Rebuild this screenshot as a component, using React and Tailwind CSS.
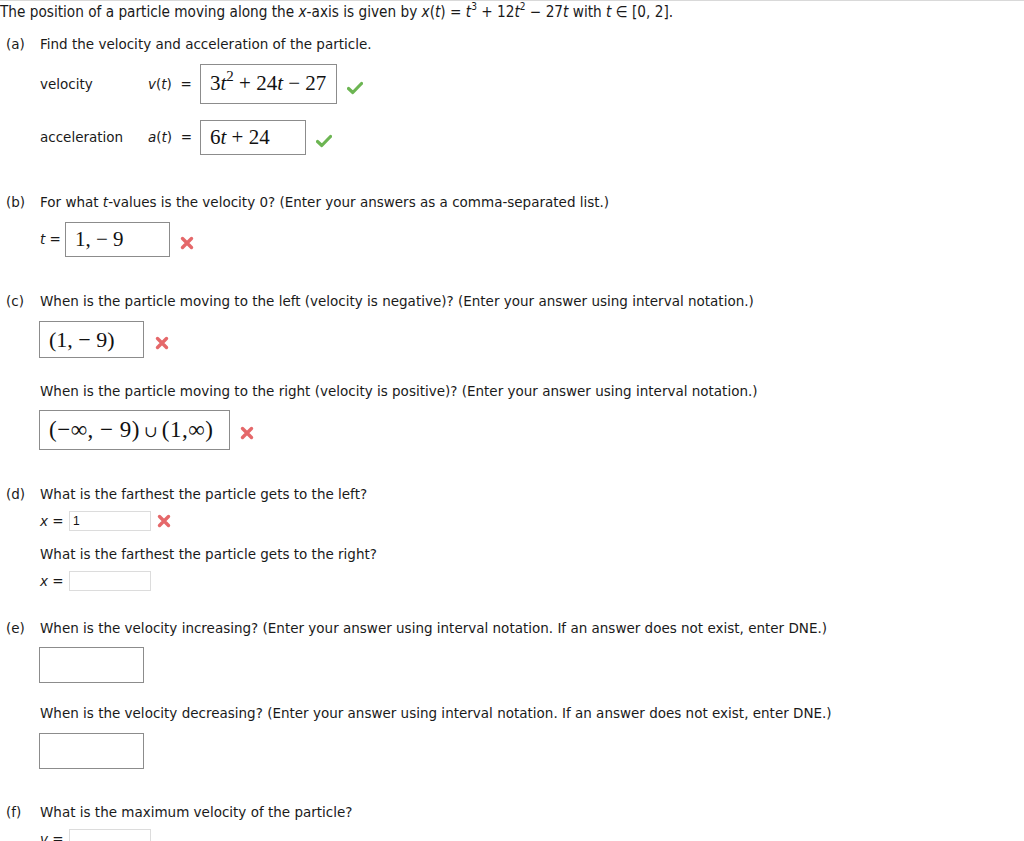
import React from "react";

const Check = () => (
  <svg width="16" height="14" viewBox="0 0 16 14" className="shrink-0">
    <path d="M1.5 7.5 L5.8 11.5 L14.5 2.5" fill="none" stroke="#6cb552" strokeWidth="3.2" strokeLinecap="round" strokeLinejoin="round" />
  </svg>
);

const Cross = () => (
  <svg width="14" height="14" viewBox="0 0 14 14" className="shrink-0">
    <path d="M2.5 2.5 L11.5 11.5 M11.5 2.5 L2.5 11.5" fill="none" stroke="#e5686a" strokeWidth="3.4" strokeLinecap="round" />
  </svg>
);

const M = ({ children, className = "" }) => (
  <span className={"font-['Liberation_Serif',serif] text-[#111] " + className}>{children}</span>
);
const I = ({ children }) => <i className="italic">{children}</i>;

const Line = ({ label, children, className = "" }) => (
  <div className={"flex h-[20px] items-center " + className}>
    <span className="w-[40px] pl-[6px]">{label}</span>
    <span>{children}</span>
  </div>
);

const Box = ({ w, h, children, className = "" }) => (
  <div className={"flex items-center border border-[#8c8c8c] bg-white pl-[9px] " + w + " " + h + " " + className}>{children}</div>
);

const Small = ({ children }) => (
  <div className="flex h-[20px] w-[82px] items-center border border-[#dcdcdc] pl-[3px] font-['Liberation_Sans',sans-serif] text-[12px] text-[#111]">{children}</div>
);

const Cup = () => <span className="mx-[4px] font-['DejaVu_Serif',serif] text-[16px] font-light">∪</span>;

export default function App() {
  return (
    <div className="min-h-[841px] w-[1024px] overflow-hidden border-t border-[#d9d9d9] bg-white font-['DejaVu_Sans',sans-serif] text-[13.5px] text-[#1a1a1a]">
      <div className="flex h-[22px] items-center whitespace-pre font-['DejaVu_Sans_Condensed','DejaVu_Sans',sans-serif] text-[15.2px] [font-stretch:condensed]">
        The position of a particle moving along the <I>x</I>-axis is given by <I>x</I>(<I>t</I>) = <I>t</I><sup className="text-[10px]">3</sup> + 12<I>t</I><sup className="text-[10px]">2</sup> − 27<I>t</I> with <I>t</I> ∈ [0, 2].
      </div>

      <Line label="(a)" className="mt-[11px]">Find the velocity and acceleration of the particle.</Line>

      <div className="mt-[10px] flex h-[40px] items-center pl-[40px]">
        <span className="w-[108px]">velocity</span>
        <span className="w-[52px]"><I>v</I>(<I>t</I>)&nbsp; =</span>
        <Box w="w-[137px]" h="h-[40px]">
          <M className="text-[21px]">3<I>t</I><sup className="-top-[0.6em] text-[15px]">2</sup> + 24<I>t</I> − 27</M>
        </Box>
        <span className="ml-[10px] mt-[8px]"><Check /></span>
      </div>

      <div className="mt-[16px] flex h-[35px] items-center pl-[40px]">
        <span className="w-[108px]">acceleration</span>
        <span className="w-[52px]"><I>a</I>(<I>t</I>)&nbsp; =</span>
        <Box w="w-[106px]" h="h-[35px]">
          <M className="text-[21px]">6<I>t</I> + 24</M>
        </Box>
        <span className="ml-[10px] mt-[6px]"><Check /></span>
      </div>

      <Line label="(b)" className="mt-[37px]">For what <I>t</I>-values is the velocity 0? (Enter your answers as a comma-separated list.)</Line>

      <div className="mt-[10px] flex h-[35px] items-center pl-[40px]">
        <span className="w-[25px]"><I>t</I> =</span>
        <Box w="w-[105px]" h="h-[35px]">
          <M className="text-[21px]">1, − 9</M>
        </Box>
        <span className="ml-[10px] mt-[6px]"><Cross /></span>
      </div>

      <Line label="(c)" className="mt-[34px]">When is the particle moving to the left (velocity is negative)? (Enter your answer using interval notation.)</Line>

      <div className="mt-[10px] flex h-[37px] items-center pl-[39px]">
        <Box w="w-[105px]" h="h-[37px]">
          <M className="text-[22px]">(1, − 9)</M>
        </Box>
        <span className="ml-[11px] mt-[6px]"><Cross /></span>
      </div>

      <Line label="" className="mt-[23px]">When is the particle moving to the right (velocity is positive)? (Enter your answer using interval notation.)</Line>

      <div className="mt-[9px] flex h-[40px] items-center pl-[39px]">
        <Box w="w-[191px]" h="h-[40px]">
          <M className="whitespace-pre text-[23px] tracking-[0.5px]">(−∞, − 9)<Cup />(1,∞)</M>
        </Box>
        <span className="ml-[10px] mt-[6px]"><Cross /></span>
      </div>

      <Line label="(d)" className="mt-[34px]">What is the farthest the particle gets to the left?</Line>

      <div className="mt-[7px] flex h-[20px] items-center pl-[40px]">
        <span className="w-[29px]"><I>x</I> =</span>
        <Small>1</Small>
        <span className="ml-[6px]"><Cross /></span>
      </div>

      <Line label="" className="mt-[13px]">What is the farthest the particle gets to the right?</Line>

      <div className="mt-[7px] flex h-[20px] items-center pl-[40px]">
        <span className="w-[29px]"><I>x</I> =</span>
        <Small></Small>
      </div>

      <Line label="(e)" className="mt-[27px]">When is the velocity increasing? (Enter your answer using interval notation. If an answer does not exist, enter DNE.)</Line>

      <div className="mt-[9px] pl-[39px]">
        <Box w="w-[105px]" h="h-[36px]" />
      </div>

      <Line label="" className="mt-[20px]">When is the velocity decreasing? (Enter your answer using interval notation. If an answer does not exist, enter DNE.)</Line>

      <div className="mt-[10px] pl-[39px]">
        <Box w="w-[105px]" h="h-[36px]" />
      </div>

      <Line label="(f)" className="mt-[33px]">What is the maximum velocity of the particle?</Line>

      <div className="mt-[7px] flex h-[20px] items-center pl-[40px]">
        <span className="w-[29px]"><I>v</I> =</span>
        <Small></Small>
      </div>
    </div>
  );
}
